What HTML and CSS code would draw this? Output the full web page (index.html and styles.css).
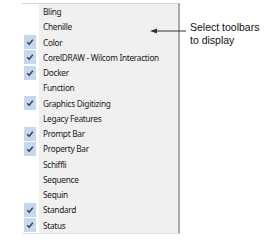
FILE: index.html
```html
<!DOCTYPE html>
<html>
<head>
<meta charset="utf-8">
<link rel="stylesheet" href="styles.css">
</head>
<body>
<div class="stage">
  <ul class="menu">
    <li class="item"><span class="gutter"></span><span class="label">Bling</span></li>
    <li class="item"><span class="gutter"></span><span class="label">Chenille</span></li>
    <li class="item on"><span class="gutter"><span class="box"><svg viewBox="0 0 12 14" width="12" height="14"><path d="M3.2 7.2 L5.2 9.2 L8.8 4.8" fill="none" stroke="#3b3f46" stroke-width="1.5"/></svg></span></span><span class="label">Color</span></li>
    <li class="item on"><span class="gutter"><span class="box"><svg viewBox="0 0 12 14" width="12" height="14"><path d="M3.2 7.2 L5.2 9.2 L8.8 4.8" fill="none" stroke="#3b3f46" stroke-width="1.5"/></svg></span></span><span class="label">CorelDRAW - Wilcom Interaction</span></li>
    <li class="item on"><span class="gutter"><span class="box"><svg viewBox="0 0 12 14" width="12" height="14"><path d="M3.2 7.2 L5.2 9.2 L8.8 4.8" fill="none" stroke="#3b3f46" stroke-width="1.5"/></svg></span></span><span class="label">Docker</span></li>
    <li class="item"><span class="gutter"></span><span class="label">Function</span></li>
    <li class="item on"><span class="gutter"><span class="box"><svg viewBox="0 0 12 14" width="12" height="14"><path d="M3.2 7.2 L5.2 9.2 L8.8 4.8" fill="none" stroke="#3b3f46" stroke-width="1.5"/></svg></span></span><span class="label">Graphics Digitizing</span></li>
    <li class="item"><span class="gutter"></span><span class="label">Legacy Features</span></li>
    <li class="item on"><span class="gutter"><span class="box"><svg viewBox="0 0 12 14" width="12" height="14"><path d="M3.2 7.2 L5.2 9.2 L8.8 4.8" fill="none" stroke="#3b3f46" stroke-width="1.5"/></svg></span></span><span class="label">Prompt Bar</span></li>
    <li class="item on"><span class="gutter"><span class="box"><svg viewBox="0 0 12 14" width="12" height="14"><path d="M3.2 7.2 L5.2 9.2 L8.8 4.8" fill="none" stroke="#3b3f46" stroke-width="1.5"/></svg></span></span><span class="label">Property Bar</span></li>
    <li class="item"><span class="gutter"></span><span class="label">Schiffli</span></li>
    <li class="item"><span class="gutter"></span><span class="label">Sequence</span></li>
    <li class="item"><span class="gutter"></span><span class="label">Sequin</span></li>
    <li class="item on"><span class="gutter"><span class="box"><svg viewBox="0 0 12 14" width="12" height="14"><path d="M3.2 7.2 L5.2 9.2 L8.8 4.8" fill="none" stroke="#3b3f46" stroke-width="1.5"/></svg></span></span><span class="label">Standard</span></li>
    <li class="item on"><span class="gutter"><span class="box"><svg viewBox="0 0 12 14" width="12" height="14"><path d="M3.2 7.2 L5.2 9.2 L8.8 4.8" fill="none" stroke="#3b3f46" stroke-width="1.5"/></svg></span></span><span class="label">Status</span></li>
  </ul>
  <div class="callout">
    <svg class="arrow" viewBox="0 0 36 8" width="36" height="8"><path d="M6 4 H36" stroke="#333" stroke-width="1"/><path d="M0 4 L7 1.5 L7 6.5 Z" fill="#333"/></svg>
    <div class="note">Select toolbars<br>to display</div>
  </div>
</div>
</body>
</html>
```

FILE: styles.css
```css
html, body {
  margin: 0;
  padding: 0;
  background: #ffffff;
}
.stage {
  position: relative;
  width: 279px;
  height: 251px;
  padding: 3px 0 0 22px;
  box-sizing: border-box;
}
.menu {
  list-style: none;
  margin: 0;
  padding: 0;
  width: 156px;
  border-top: 1px solid #d4d4d4;
  border-right: 2px solid #a8a8a8;
  border-bottom: 1px solid #e2e2e2;
  display: flex;
  flex-direction: column;
  background: linear-gradient(to right, #ffffff 17px, #f0f0f0 17px);
}
.item {
  display: flex;
  align-items: center;
  height: 15.25px;
}
.gutter {
  width: 17px;
  height: 100%;
  display: flex;
  align-items: center;
  padding-left: 2px;
  box-sizing: border-box;
}
.box {
  width: 12px;
  height: 14px;
  background: #c5d8f1;
  display: flex;
}
.label {
  padding-left: 4px;
  font-family: "Noto Sans", "Open Sans", sans-serif;
  font-size: 8.3px;
  color: #1a1a1a;
  white-space: nowrap;
  letter-spacing: -0.3px;
}
.callout {
  position: absolute;
  left: 150px;
  top: 21px;
  display: flex;
  align-items: flex-start;
}
.arrow {
  margin-top: 6px;
}
.note {
  margin-left: 4px;
  font-family: "Liberation Sans", Arial, sans-serif;
  font-size: 10.5px;
  line-height: 13px;
  color: #111;
}
```
